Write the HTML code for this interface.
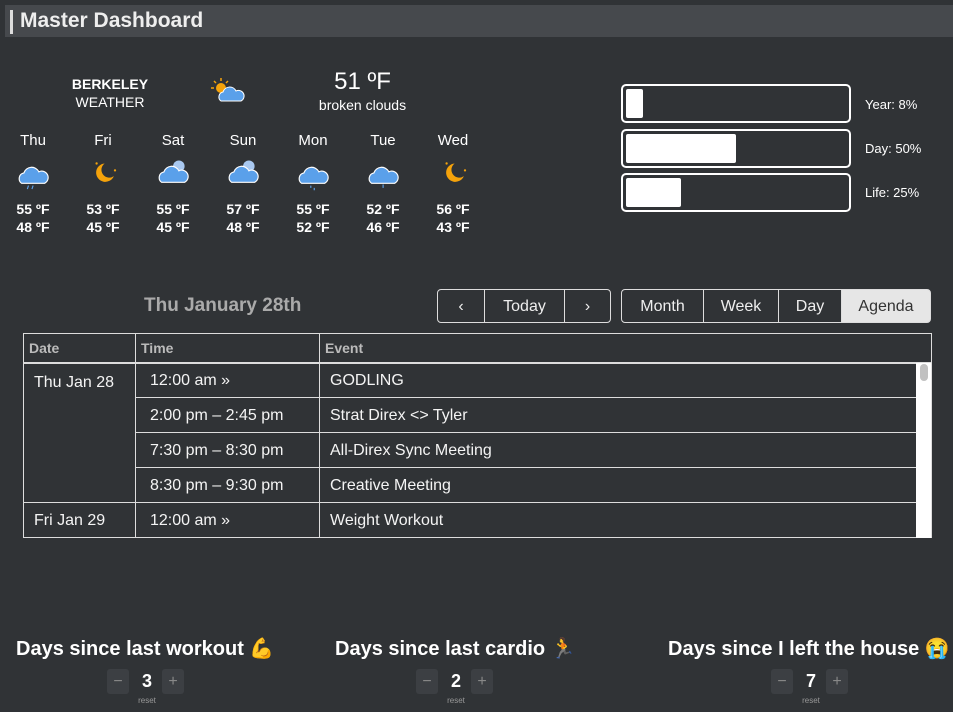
<!DOCTYPE html><html><head><meta charset="utf-8"><style>
*{box-sizing:border-box;margin:0;padding:0}
body{width:953px;height:712px;background:#303336;color:#fff;font-family:"Liberation Sans",sans-serif;position:relative;overflow:hidden}
.a{position:absolute}
.c{text-align:center}
.b{font-weight:bold}
.bar{position:absolute;left:621px;width:230px;height:39px;border:2px solid #fff;border-radius:5px}
.bar i{position:absolute;left:3px;top:3px;height:29px;background:#fff;border-radius:2px}
.btn{position:absolute;top:289px;height:34px;border:1px solid #ddd;font-size:16px;line-height:33px;text-align:center;color:#eee}
td{border:1px solid #ddd;font-size:16px;height:35px;vertical-align:middle;color:#f4f4f4;padding-top:2px}
th{border:1px solid #ddd;font-size:14px;text-align:left;padding-left:5px;color:#bbb;height:29px;border-bottom:2px solid #ddd}
th:last-child{border-right:none}
table{border-collapse:collapse;position:absolute;left:23px;top:333px;width:894px}
.cnt{position:absolute;top:669px;width:80px;height:25px}
.cnt span{position:absolute;top:0;width:22px;height:25px;background:#3c3f43;border-radius:3px;color:#888;text-align:center;line-height:25px;font-size:16px}
.cnt b{position:absolute;left:30px;width:20px;text-align:center;font-size:18px;line-height:25px}
.cnt small{position:absolute;top:27px;left:0;width:80px;text-align:center;font-size:8px;color:#999}
</style></head><body>
<div class="a" style="left:5px;top:5px;width:948px;height:32px;background:#46494d"></div>
<div class="a" style="left:10px;top:10px;width:3px;height:24px;background:#ddd"></div>
<div class="a b" style="left:20px;top:9px;font-size:21px;color:#eee">Master Dashboard</div>

<div class="a b c" style="left:55px;top:75px;width:110px;font-size:14px;line-height:18px">BERKELEY<br><span style="font-weight:normal">WEATHER</span></div>
<svg class="a" style="left:209px;top:76px" width="38" height="28" viewBox="0 0 38 28"><g stroke="#f5a30b" stroke-width="1.5"><line x1="12" y1="2" x2="12" y2="5"/><line x1="5" y1="5" x2="7" y2="7"/><line x1="2" y1="12" x2="5" y2="12"/><line x1="19" y1="5" x2="17" y2="7"/></g><circle cx="12" cy="12" r="5" fill="#f5a30b"/><path d="M12 25a5 5 0 0 1 2-9a7 7 0 0 1 13-1a5 5 0 0 1 5 10z" fill="#5aa0ea" stroke="#fff" stroke-width="1"/></svg>
<div class="a c" style="left:300px;top:68px;width:125px;font-size:24px">51 ºF</div>
<div class="a c b" style="left:300px;top:97px;width:125px;font-size:14px;font-weight:normal">broken clouds</div>

<svg width="0" height="0" style="position:absolute"><defs>
<path id="cl" d="M4 22a5 5 0 0 1 2-9a7 7 0 0 1 13-1a5 5 0 0 1 5 10z" fill="#5aa0ea" stroke="#fff" stroke-width="1"/>
</defs></svg>
<div class="a c" style="left:0;top:132px;width:490px;font-size:15px">
<div class="a" style="left:3px;width:60px">Thu</div><div class="a" style="left:73px;width:60px">Fri</div><div class="a" style="left:143px;width:60px">Sat</div><div class="a" style="left:213px;width:60px">Sun</div><div class="a" style="left:283px;width:60px">Mon</div><div class="a" style="left:353px;width:60px">Tue</div><div class="a" style="left:423px;width:60px">Wed</div>
</div>
<svg class="a" style="left:0;top:158px" width="490" height="36">
<g transform="translate(17,0) scale(1.15)"><use href="#cl"/><path d="M10 24l-1 3M14 24l-1 3" stroke="#5aa0ea"/></g>
<g transform="translate(92,2) scale(1.15)"><path d="M11 3a8 8 0 1 0 8 11a6 6 0 0 1-8-11z" fill="#f5a30b"/><circle cx="4" cy="3" r="1" fill="#f5a30b"/><circle cx="20" cy="9" r="1" fill="#f5a30b"/></g>
<g transform="translate(157,-1) scale(1.15)"><circle cx="19" cy="8" r="5" fill="#a8c8f0"/><use href="#cl"/></g>
<g transform="translate(227,-1) scale(1.15)"><circle cx="19" cy="8" r="5" fill="#a8c8f0"/><use href="#cl"/></g>
<g transform="translate(297,0) scale(1.15)"><use href="#cl"/><path d="M12 24v2M15 26v2" stroke="#5aa0ea"/></g>
<g transform="translate(367,0) scale(1.15)"><use href="#cl"/><path d="M14 23v3" stroke="#5aa0ea"/></g>
<g transform="translate(442,2) scale(1.15)"><path d="M11 3a8 8 0 1 0 8 11a6 6 0 0 1-8-11z" fill="#f5a30b"/><circle cx="4" cy="3" r="1" fill="#f5a30b"/><circle cx="20" cy="9" r="1" fill="#f5a30b"/></g>
</svg>
<div class="a c b" style="left:0;top:200px;width:490px;font-size:14px;line-height:18px">
<div class="a" style="left:3px;width:60px">55 ºF<br>48 ºF</div><div class="a" style="left:73px;width:60px">53 ºF<br>45 ºF</div><div class="a" style="left:143px;width:60px">55 ºF<br>45 ºF</div><div class="a" style="left:213px;width:60px">57 ºF<br>48 ºF</div><div class="a" style="left:283px;width:60px">55 ºF<br>52 ºF</div><div class="a" style="left:353px;width:60px">52 ºF<br>46 ºF</div><div class="a" style="left:423px;width:60px">56 ºF<br>43 ºF</div>
</div>

<div class="bar" style="top:84px"><i style="width:17px"></i></div>
<div class="bar" style="top:129px"><i style="width:110px"></i></div>
<div class="bar" style="top:173px"><i style="width:55px"></i></div>
<div class="a" style="left:865px;top:97px;font-size:13px">Year: 8%</div>
<div class="a" style="left:865px;top:141px;font-size:13px">Day: 50%</div>
<div class="a" style="left:865px;top:185px;font-size:13px">Life: 25%</div>

<div class="a b" style="left:144px;top:295px;font-size:19px;color:#aaa">Thu January 28th</div>
<div class="btn" style="left:437px;width:48px;border-radius:4px 0 0 4px">‹</div>
<div class="btn" style="left:484px;width:81px">Today</div>
<div class="btn" style="left:564px;width:47px;border-radius:0 4px 4px 0">›</div>
<div class="btn" style="left:621px;width:83px;border-radius:4px 0 0 4px">Month</div>
<div class="btn" style="left:703px;width:76px">Week</div>
<div class="btn" style="left:778px;width:64px">Day</div>
<div class="btn" style="left:841px;width:90px;border-radius:0 4px 4px 0;background:#e6e6e6;color:#333">Agenda</div>

<div class="a" style="left:23px;top:333px;width:909px;height:30px;border:1px solid #ddd"></div>
<table>
<tr><th style="width:112px">Date</th><th style="width:184px">Time</th><th>Event</th></tr>
<tr><td rowspan="4" style="vertical-align:top;padding:10px 10px">Thu Jan 28</td><td style="padding-left:14px">12:00 am »</td><td style="padding-left:10px">GODLING</td></tr>
<tr><td style="padding-left:14px">2:00 pm – 2:45 pm</td><td style="padding-left:10px">Strat Direx &lt;&gt; Tyler</td></tr>
<tr><td style="padding-left:14px">7:30 pm – 8:30 pm</td><td style="padding-left:10px">All-Direx Sync Meeting</td></tr>
<tr><td style="padding-left:14px">8:30 pm – 9:30 pm</td><td style="padding-left:10px">Creative Meeting</td></tr>
<tr><td style="padding-left:10px">Fri Jan 29</td><td style="padding-left:14px">12:00 am »</td><td style="padding-left:10px">Weight Workout</td></tr>
</table>
<div class="a" style="left:916px;top:363px;width:16px;height:175px;background:#fff;border-right:1px solid #ddd"></div>
<div class="a" style="left:920px;top:364px;width:8px;height:17px;background:#c1c1c1;border-radius:4px"></div>

<div class="a b" style="left:16px;top:636px;font-size:20px">Days since last workout 💪</div>
<div class="a b" style="left:335px;top:636px;font-size:20px">Days since last cardio 🏃</div>
<div class="a b" style="left:668px;top:636px;font-size:20px;white-space:nowrap">Days since I left the house 😭</div>
<div class="cnt" style="left:107px"><span style="left:0">−</span><b>3</b><span style="left:55px">+</span><small>reset</small></div>
<div class="cnt" style="left:416px"><span style="left:0">−</span><b>2</b><span style="left:55px">+</span><small>reset</small></div>
<div class="cnt" style="left:771px"><span style="left:0">−</span><b>7</b><span style="left:55px">+</span><small>reset</small></div>
</body></html>
